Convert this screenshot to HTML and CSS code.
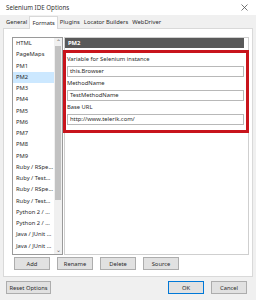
FILE: index.html
```html
<!DOCTYPE html>
<html lang="en">
<head>
    <meta charset="UTF-8">
    <meta name="viewport" content="width=device-width, initial-scale=1.0">
    <title>Selenium IDE Options</title>
    <link rel="stylesheet" href="styles.css">
</head>
<body>
    <div class="window">
        <div class="titlebar">
            <span class="title">Selenium IDE Options</span>
            <svg class="close" width="7" height="7" viewBox="0 0 7 7">
                <path d="M0.5 0.5 L6.5 6.5 M6.5 0.5 L0.5 6.5" stroke="#555" stroke-width="0.8" fill="none"/>
            </svg>
        </div>

        <div class="tabs">
            <span class="tab">General</span>
            <span class="tab active">Formats</span>
            <span class="tab">Plugins</span>
            <span class="tab">Locator Builders</span>
            <span class="tab">WebDriver</span>
        </div>

        <div class="panel">
            <div class="formats">
                <div class="listbox">
                    <ul class="items">
                        <li>HTML</li>
                        <li>PageMaps</li>
                        <li>PM1</li>
                        <li class="selected">PM2</li>
                        <li>PM3</li>
                        <li>PM4</li>
                        <li>PM5</li>
                        <li>PM6</li>
                        <li>PM7</li>
                        <li>PM8</li>
                        <li>PM9</li>
                        <li>Ruby / RSpe...</li>
                        <li>Ruby / Test...</li>
                        <li>Ruby / RSpe...</li>
                        <li>Ruby / Test...</li>
                        <li>Python 2 / ...</li>
                        <li>Python 2 / ...</li>
                        <li>Java / JUnit ...</li>
                        <li>Java / JUnit ...</li>
                        <li class="partial">Java / JUnit ...</li>
                    </ul>
                    <div class="scrollbar">
                        <span class="arrow">&#8963;</span>
                        <span class="thumb"></span>
                        <span class="track"></span>
                        <span class="arrow">&#8964;</span>
                    </div>
                </div>

                <div class="details">
                    <div class="details-head">PM2</div>
                    <div class="options">
                        <label>Variable for Selenium instance</label>
                        <div class="field">this.Browser</div>
                        <label>MethodName</label>
                        <div class="field">TestMethodName</div>
                        <label>Base URL</label>
                        <div class="field">http://www.telerik.com/</div>
                    </div>
                </div>
            </div>

            <div class="actions">
                <button>Add</button>
                <button>Rename</button>
                <button>Delete</button>
                <button>Source</button>
            </div>
        </div>

        <div class="footer">
            <button class="wide">Reset Options</button>
            <span class="spacer"></span>
            <button class="default">OK</button>
            <button>Cancel</button>
        </div>
    </div>
</body>
</html>
```

FILE: styles.css
```css
body {
    margin: 0;
    font-family: 'Noto Sans', 'Open Sans', sans-serif;
    font-size: 5.8px;
    color: #2b2b2b;
}
.window {
    width: 256px;
    height: 300px;
    background-color: #f0f0f0;
    overflow: hidden;
}
.titlebar {
    height: 15px;
    background-color: #fff;
    display: flex;
    align-items: center;
    justify-content: space-between;
    padding: 0 8px 0 6px;
    box-sizing: border-box;
    font-size: 6.2px;
    color: #333;
}
.close {
    display: block;
}
.tabs {
    display: flex;
    align-items: flex-end;
    height: 13px;
    padding-left: 4px;
}
.tab {
    height: 11px;
    line-height: 11px;
    padding: 0 2px;
}
.tab.active {
    height: 13px;
    line-height: 12px;
    background-color: #fff;
    border: 1px solid #d9d9d9;
    border-bottom: none;
    box-sizing: border-box;
    margin-bottom: -1px;
    position: relative;
    z-index: 1;
}
.panel {
    margin: 0 3px;
    height: 249px;
    box-sizing: border-box;
    background-color: #fff;
    border: 1px solid #d9d9d9;
    padding: 8px 3px 0 8px;
}
.formats {
    display: flex;
    height: 218px;
}
.listbox {
    width: 51px;
    height: 218px;
    box-sizing: border-box;
    border: 1px solid #9a9a9a;
    display: flex;
    flex-shrink: 0;
}
.items {
    flex: 1;
    list-style: none;
    margin: 0;
    padding: 0;
    overflow: hidden;
}
.items li {
    height: 11.25px;
    line-height: 11.25px;
    padding-left: 3px;
    white-space: nowrap;
}
.items li.partial {
    height: 5px;
    line-height: 9px;
    overflow: hidden;
}
.items li.selected {
    background-color: #cce8ff;
}
.scrollbar {
    width: 8px;
    background-color: #f0f0f0;
    display: flex;
    flex-direction: column;
}
.arrow {
    height: 8px;
    line-height: 8px;
    text-align: center;
    font-size: 6px;
    color: #606060;
}
.thumb {
    height: 154px;
    margin: 0 1px;
    background-color: #c2c2c2;
}
.track {
    flex: 1;
}
.details {
    flex: 1;
    margin-left: 1px;
    border: 1px solid #cfcfcf;
}
.details-head {
    height: 10px;
    line-height: 10px;
    margin-right: 4px;
    padding-left: 3px;
    background-color: #595959;
    color: #fff;
    font-weight: bold;
}
.options {
    margin: 2px -1px 0 -2px;
    border: 3px solid #c8141c;
    padding: 2px 2px 5px 1px;
}
.options label {
    display: block;
    line-height: 8px;
    margin-bottom: 3px;
}
.field {
    height: 11px;
    line-height: 9px;
    box-sizing: border-box;
    border: 1px solid #b8b8b8;
    padding: 0 2px;
    margin-bottom: 2px;
}
.field:last-child {
    margin-bottom: 0;
}
.actions {
    display: flex;
    gap: 7px;
    margin-top: 2px;
    padding-left: 2px;
}
button {
    width: 36px;
    height: 13px;
    padding: 0;
    font-family: inherit;
    font-size: 5.8px;
    color: #2b2b2b;
    background-color: #e1e1e1;
    border: 1px solid #adadad;
}
button.default {
    border-color: #0078d7;
}
button.wide {
    width: 45px;
}
.footer {
    display: flex;
    gap: 7px;
    margin-top: 4px;
    padding: 0 9px 0 6px;
}
.spacer {
    flex: 1;
}
```
